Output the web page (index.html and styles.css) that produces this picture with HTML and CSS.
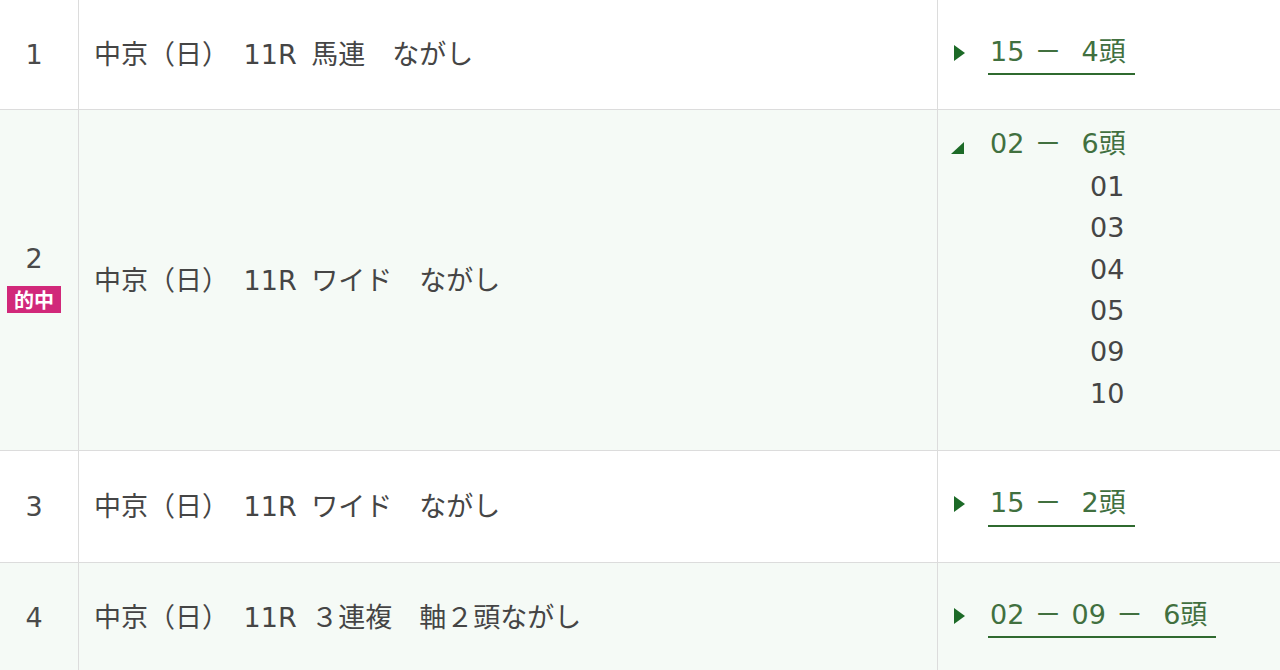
FILE: index.html
```html
<!DOCTYPE html>
<html lang="ja">
<head>
<meta charset="utf-8">
<title>購入履歴</title>
<link rel="stylesheet" href="styles.css">
</head>
<body>
<div class="list">
  <div class="row first">
    <div class="num"><span class="n">1</span></div>
    <div class="desc">中京（日） 11R 馬連　ながし</div>
    <div class="pick">
      <div class="pick-line">
        <svg class="tri" width="12" height="16" viewBox="0 0 12 16"><polygon points="1,0 12,8 1,16"/></svg>
        <a class="combo link" href="#">15 －&nbsp; 4頭</a>
      </div>
    </div>
  </div>
  <div class="row alt">
    <div class="num"><span class="n">2</span><span class="badge">的中</span></div>
    <div class="desc">中京（日） 11R ワイド　ながし</div>
    <div class="pick open">
      <div class="pick-line">
        <svg class="tri down" width="13" height="12" viewBox="0 0 13 12"><polygon points="13,0 13,12 0,12"/></svg>
        <span class="combo">02 －&nbsp; 6頭</span>
      </div>
      <ul class="sub">
        <li>01</li>
        <li>03</li>
        <li>04</li>
        <li>05</li>
        <li>09</li>
        <li>10</li>
      </ul>
    </div>
  </div>
  <div class="row">
    <div class="num"><span class="n">3</span></div>
    <div class="desc">中京（日） 11R ワイド　ながし</div>
    <div class="pick">
      <div class="pick-line">
        <svg class="tri" width="12" height="16" viewBox="0 0 12 16"><polygon points="1,0 12,8 1,16"/></svg>
        <a class="combo link" href="#">15 －&nbsp; 2頭</a>
      </div>
    </div>
  </div>
  <div class="row alt">
    <div class="num"><span class="n">4</span></div>
    <div class="desc">中京（日） 11R ３連複　軸２頭ながし</div>
    <div class="pick">
      <div class="pick-line">
        <svg class="tri" width="12" height="16" viewBox="0 0 12 16"><polygon points="1,0 12,8 1,16"/></svg>
        <a class="combo link" href="#">02 － 09 －&nbsp; 6頭</a>
      </div>
    </div>
  </div>
</div>
</body>
</html>
```

FILE: styles.css
```css
html, body {
  margin: 0;
  padding: 0;
  background: #ffffff;
  overflow: hidden;
}

body {
  font-family: "DejaVu Sans", "Noto Sans CJK JP", sans-serif;
  font-size: 27px;
  line-height: 41.4px;
  color: #454545;
}

.list {
  width: 1280px;
}

.row {
  display: grid;
  grid-template-columns: 79px 859px 1fr;
  border-bottom: 1px solid #dcdcdc;
  background: #ffffff;
}

.row.alt {
  background: #f5faf6;
}

.num {
  border-right: 1px solid #dcdcdc;
  display: flex;
  flex-direction: column;
  align-items: center;
  justify-content: center;
  padding-right: 10px;
  color: #4a4a4a;
}

.badge {
  display: block;
  margin-top: 7px;
  margin-bottom: 10px;
  padding: 0 7px;
  background: #d1287a;
  color: #ffffff;
  font-size: 20px;
  line-height: 27px;
  font-weight: bold;
  font-family: "Noto Sans CJK JP", sans-serif;
}

.desc {
  border-right: 1px solid #dcdcdc;
  display: flex;
  align-items: center;
  padding-left: 15px;
  word-spacing: 6px;
}

.pick {
  padding: 31px 0 35px 15px;
}

.row.first .pick {
  padding-bottom: 34px;
}

.pick.open {
  padding: 13px 0 36px 15px;
}

.pick-line {
  display: flex;
  align-items: center;
}

.tri {
  fill: #1c6a27;
  flex: none;
  margin-right: 23px;
}

.tri.down {
  margin-left: -2px;
  margin-right: 24px;
  margin-top: 6px;
}

.combo {
  color: #41703f;
  text-decoration: none;
  padding: 0 9px 1px 2px;
  word-spacing: 1.5px;
}

.link {
  display: inline-block;
  border-bottom: 2px solid #2f6a2f;
}

.sub {
  list-style: none;
  margin: 0 0 0 137px;
  padding: 0;
  color: #454545;
}
```
